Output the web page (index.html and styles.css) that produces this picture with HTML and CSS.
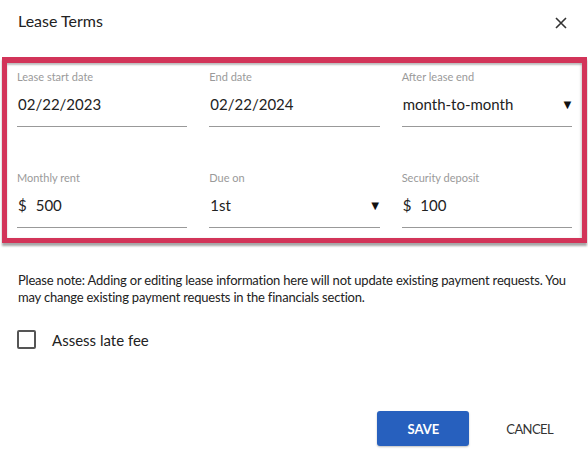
FILE: index.html
```html
<!DOCTYPE html>
<html>
<head>
<meta charset="utf-8">
<link rel="stylesheet" href="styles.css">
</head>
<body>
<div class="dialog">
  <div class="header">
    <h1 class="title">Lease Terms</h1>
    <button class="close" aria-label="Close">
      <svg width="12" height="12" viewBox="0 0 12 12"><path d="M1 1 L11 11 M11 1 L1 11" stroke="#333" stroke-width="1.6" fill="none"/></svg>
    </button>
  </div>

  <div class="terms">
    <div class="field">
      <div class="label">Lease start date</div>
      <div class="value">02/22/2023</div>
    </div>
    <div class="field">
      <div class="label">End date</div>
      <div class="value">02/22/2024</div>
    </div>
    <div class="field">
      <div class="label">After lease end</div>
      <div class="value select">month-to-month<span class="arrow">▼</span></div>
    </div>
    <div class="field">
      <div class="label">Monthly rent</div>
      <div class="value"><span class="cur">$</span>500</div>
    </div>
    <div class="field">
      <div class="label">Due on</div>
      <div class="value select">1st<span class="arrow">▼</span></div>
    </div>
    <div class="field">
      <div class="label">Security deposit</div>
      <div class="value"><span class="cur">$</span>100</div>
    </div>
  </div>

  <p class="note">Please note: Adding or editing lease information here will not update existing payment requests. You may change existing payment requests in the financials section.</p>

  <label class="check"><span class="box"></span><span>Assess late fee</span></label>

  <div class="actions">
    <button class="save">SAVE</button>
    <button class="cancel">CANCEL</button>
  </div>
</div>
</body>
</html>
```

FILE: styles.css
```css
* { box-sizing: border-box; }
body {
  margin: 0;
  background: #fff;
  font-family: Lato, "Open Sans", sans-serif;
  color: #222;
}
.dialog { width: 588px; height: 453px; }
.header {
  display: flex;
  align-items: center;
  justify-content: space-between;
  height: 42px;
  padding: 0 20px 0 18px;
}
.title {
  margin: 0;
  font-size: 16px;
  font-weight: 400;
  color: #222;
  position: relative;
  top: -1px;
}
.close {
  border: 0;
  background: none;
  padding: 0;
  width: 14px;
  height: 14px;
  display: flex;
  align-items: center;
  justify-content: center;
  position: relative;
  top: 2px;
}
.terms {
  margin: 15px 1px 0 2px;
  border: 5px solid #d23459;
  border-top-width: 6px;
  box-shadow: 0 3px 2px rgba(0,0,0,0.35), inset 0 2px 2px rgba(0,0,0,0.25), inset -2px 0 2px rgba(0,0,0,0.08);
  display: grid;
  grid-template-columns: repeat(3, 1fr);
  column-gap: 22px;
  row-gap: 44px;
  padding: 7px 10px 10px 10px;
}
.field {
  border-bottom: 1px solid #999;
  padding-bottom: 12px;
}
.label {
  font-size: 11px;
  line-height: 14px;
  color: #9a9a9a;
}
.value {
  margin-top: 10px;
  font-size: 15px;
  line-height: 20px;
  color: #222;
  padding-left: 1px;
  display: flex;
  align-items: center;
}
.select { justify-content: space-between; }
.arrow { font-size: 13px; color: #111; margin-right: -2px; }
.cur { margin-right: 9px; }
.note {
  margin: 29px 12px 0 18px;
  font-size: 13px;
  line-height: 17px;
  letter-spacing: -0.2px;
  color: #222;
}
.check {
  display: flex;
  align-items: center;
  margin: 24px 0 0 17px;
  font-size: 15px;
  color: #222;
}
.box {
  width: 19px;
  height: 19px;
  border: 2px solid #555;
  border-radius: 2px;
  margin-right: 16px;
}
.actions {
  display: flex;
  align-items: center;
  justify-content: flex-end;
  margin-top: 62px;
  padding-right: 35px;
}
.save {
  width: 92px;
  height: 35px;
  background: #2760be;
  color: #fff;
  border: 0;
  border-radius: 3px;
  font-family: Lato, sans-serif;
  font-weight: 700;
  font-size: 13px;
  box-shadow: 0 1px 2px rgba(0,0,0,0.25);
}
.cancel {
  margin-left: 37px;
  background: none;
  border: 0;
  padding: 0;
  font-family: Lato, sans-serif;
  font-size: 13px;
  letter-spacing: -0.6px;
  color: #333;
}
```
